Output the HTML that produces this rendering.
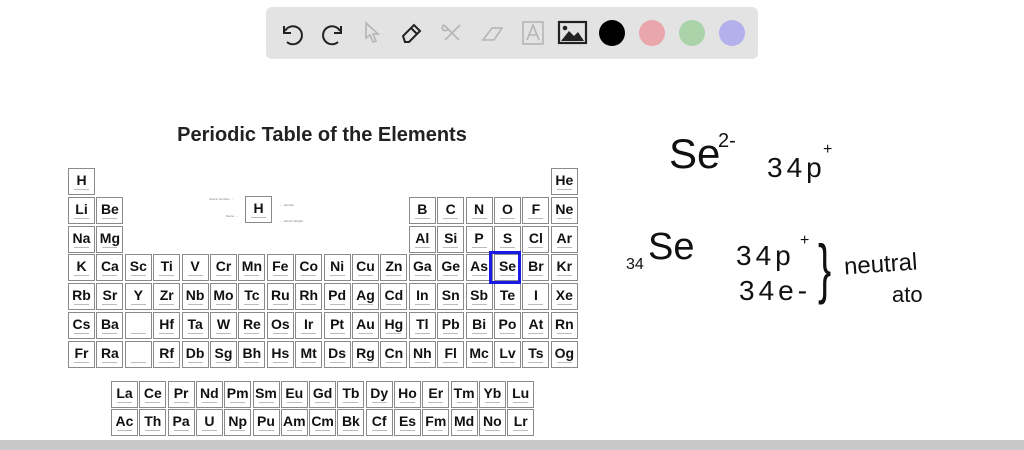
<!DOCTYPE html><html><head><meta charset="utf-8"><style>
body{margin:0;width:1024px;height:450px;background:#fff;position:relative;overflow:hidden;font-family:"Liberation Sans",sans-serif}
.tb{position:absolute;left:266px;top:7px;width:492px;height:52px;background:#e3e3e3;border-radius:6px}
.c{position:absolute;border:1px solid #8a8a8a;box-sizing:border-box;width:27px;height:27px;background:#fff}
.c b{position:absolute;left:0;right:0;top:3px;text-align:center;font-size:14px;color:#111}
.c i{position:absolute;left:2px;top:0;font-size:3px;color:#888;font-style:normal}
.c s{position:absolute;left:5px;right:5px;top:20px;height:1px;background:#bbb;text-decoration:none}
.h{position:absolute;font-family:"Liberation Sans",sans-serif;color:#111;font-weight:normal}
</style></head><body>
<div class="tb"></div>
<svg style="position:absolute;left:0;top:0" width="1024" height="70">
<g fill="none" stroke="#222" stroke-width="2">
<path d="M284 26 L284 33 L291 33 M285 31 A9 9 0 1 1 287 42"/>
<path d="M341 26 L341 33 L334 33 M340 31 A9 9 0 1 0 338 42"/>
<path d="M405 42 L403 36 L414 25 L420 31 L409 42 Z M411 28 L417 34"/>
</g>
<g fill="none" stroke="#b5b5b5" stroke-width="1.6">
<path d="M366 23 L366 38 L370 35 L373 42 L376 41 L373 34 L378 34 Z"/>
<path d="M444 25 L459 40 M460 25 L445 40 M444 25 a3 3 0 1 0 4 4"/>
<path d="M483 40 L492 28 L502 28 L494 40 Z"/>
<rect x="523" y="22" width="20" height="22"/><path d="M527 40 L533 25 L539 40 M529 35 L537 35"/>
</g>
<rect x="559" y="22" width="27" height="21" fill="none" stroke="#222" stroke-width="2.2"/>
<path d="M561 41 L569 31 L574 36 L578 32 L584 41 Z" fill="#222"/><circle cx="565" cy="28" r="2.3" fill="#222"/>
<circle cx="612" cy="33" r="13" fill="#000"/>
<circle cx="652" cy="33" r="13" fill="#e9a7ad"/>
<circle cx="692" cy="33" r="13" fill="#abd3a9"/>
<circle cx="732" cy="33" r="13" fill="#b3b0ec"/>
</svg>
<div style="position:absolute;left:150px;top:124px;width:344px;text-align:center;font-weight:bold;font-size:20px;color:#222">Periodic Table of the Elements</div>
<div id="pt"></div>
<div style="position:absolute;left:489px;top:251px;width:32px;height:33px;border:3px solid #1a1ae6;box-sizing:border-box"></div>
<div style="position:absolute;left:209px;top:197px;font-size:3px;color:#777">Atomic Number →</div>
<div style="position:absolute;left:226px;top:214px;font-size:3px;color:#777">Name →</div>
<div style="position:absolute;left:280px;top:203px;font-size:3px;color:#777">← Symbol</div>
<div style="position:absolute;left:280px;top:219px;font-size:3px;color:#777">← Atomic Weight</div>
<div style="position:absolute;left:0;top:440px;width:1024px;height:10px;background:#c8c8c8"></div>
<div class="h" style="left:669px;top:130px;font-size:42px">Se</div>
<div class="h" style="left:718px;top:130px;font-size:20px">2-</div>
<div class="h" style="left:767px;top:152px;font-size:28px;letter-spacing:4px">34p</div>
<div class="h" style="left:823px;top:141px;font-size:16px">+</div>
<div class="h" style="left:626px;top:256px;font-size:16px">34</div>
<div class="h" style="left:648px;top:226px;font-size:38px">Se</div>
<div class="h" style="left:736px;top:240px;font-size:28px;letter-spacing:4px">34p</div>
<div class="h" style="left:800px;top:232px;font-size:16px">+</div>
<div class="h" style="left:739px;top:275px;font-size:28px;letter-spacing:4px">34e-</div>
<div class="h" style="left:818px;top:230px;font-size:66px;transform:scaleX(.6);transform-origin:left">}</div>
<div class="h" style="left:844px;top:251px;font-size:24px;transform:rotate(-4deg)">neutral</div>
<div class="h" style="left:892px;top:282px;font-size:22px">ato</div>
<script>
var rows=[["H",1,1],["He",1,18],["Li",2,1],["Be",2,2],["B",2,13],["C",2,14],["N",2,15],["O",2,16],["F",2,17],["Ne",2,18],["Na",3,1],["Mg",3,2],["Al",3,13],["Si",3,14],["P",3,15],["S",3,16],["Cl",3,17],["Ar",3,18]];
var r4="K Ca Sc Ti V Cr Mn Fe Co Ni Cu Zn Ga Ge As Se Br Kr".split(" "),r5="Rb Sr Y Zr Nb Mo Tc Ru Rh Pd Ag Cd In Sn Sb Te I Xe".split(" "),r6="Cs Ba · Hf Ta W Re Os Ir Pt Au Hg Tl Pb Bi Po At Rn".split(" "),r7="Fr Ra · Rf Db Sg Bh Hs Mt Ds Rg Cn Nh Fl Mc Lv Ts Og".split(" ");
[r4,r5,r6,r7].forEach(function(r,k){r.forEach(function(s,j){rows.push([s,4+k,j+1])})});
var h="";function cell(s,x,y){h+='<div class="c" style="left:'+x+'px;top:'+y+'px"><i>·</i><b>'+(s=="·"?"":s)+'</b><s></s></div>'}
rows.forEach(function(e){cell(e[0],68+(e[2]-1)*28.4,168+(e[1]-1)*28.8)});
cell("H",245,196);
"La Ce Pr Nd Pm Sm Eu Gd Tb Dy Ho Er Tm Yb Lu".split(" ").forEach(function(s,j){cell(s,111+j*28.3,381)});
"Ac Th Pa U Np Pu Am Cm Bk Cf Es Fm Md No Lr".split(" ").forEach(function(s,j){cell(s,111+j*28.3,409)});
document.getElementById("pt").innerHTML=h;
</script>
</body></html>
